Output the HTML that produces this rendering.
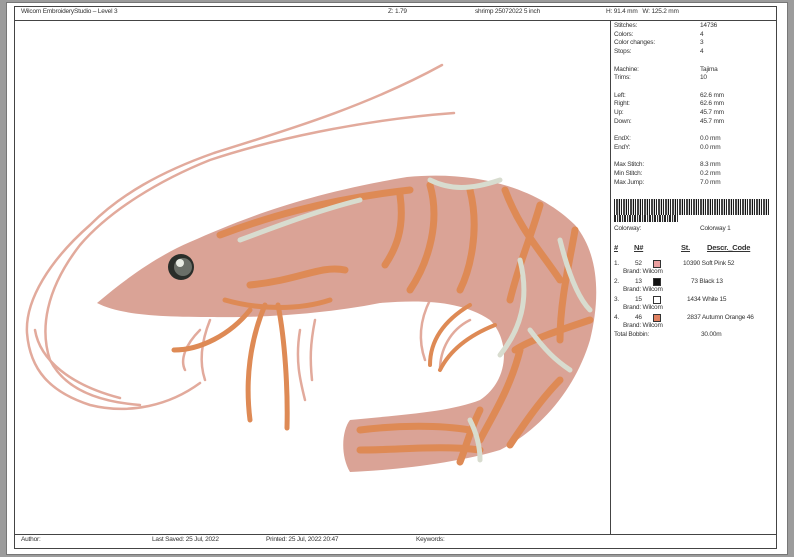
<!DOCTYPE html>
<html><head><style>
body{margin:0;width:794px;height:557px;background:#9c9c9c;position:relative;overflow:hidden;font-family:"Liberation Sans",sans-serif;}
.page{position:absolute;left:6px;top:2px;width:780px;height:551px;background:#fff;border:1px solid #777;}
.frame{position:absolute;left:14px;top:6px;width:761px;height:541px;border:1px solid #444;}
.t{position:absolute;font-size:6.5px;color:#333;white-space:nowrap;letter-spacing:-0.2px}
.sw{position:absolute;width:6px;height:6px;border:1px solid #333}
</style></head><body>
<div class="page"></div>
<div class="frame"></div>
<div style="position:absolute;left:14px;top:20px;width:762px;height:1px;background:#444"></div>
<div style="position:absolute;left:14px;top:534px;width:762px;height:1px;background:#444"></div>
<div style="position:absolute;left:610px;top:20px;width:1px;height:514px;background:#444"></div>
<div class="t" style="left:21px;top:8px">Wilcom EmbroideryStudio – Level 3</div>
<div class="t" style="left:388px;top:8px">Z: 1.79</div>
<div class="t" style="left:475px;top:8px">shrimp 25072022 5 inch</div>
<div class="t" style="left:606px;top:8px">H: 91.4 mm &nbsp; W: 125.2 mm</div>
<div class="t" style="left:21px;top:536px">Author:</div>
<div class="t" style="left:152px;top:536px">Last Saved: 25 Jul, 2022</div>
<div class="t" style="left:266px;top:536px">Printed: 25 Jul, 2022 20:47</div>
<div class="t" style="left:416px;top:536px">Keywords:</div>
<div class="t" style="left:614px;top:22px;line-height:8.7px">Stitches:<br>Colors:<br>Color changes:<br>Stops:<br><br>Machine:<br>Trims:<br><br>Left:<br>Right:<br>Up:<br>Down:<br><br>EndX:<br>EndY:<br><br>Max Stitch:<br>Min Stitch:<br>Max Jump:</div>
<div class="t" style="left:700px;top:22px;line-height:8.7px">14736<br>4<br>3<br>4<br><br>Tajima<br>10<br><br>62.6 mm<br>62.6 mm<br>45.7 mm<br>45.7 mm<br><br>0.0 mm<br>0.0 mm<br><br>8.3 mm<br>0.2 mm<br>7.0 mm</div>
<div style="position:absolute;left:614px;top:199px;width:155px;height:16px;background:repeating-linear-gradient(90deg,#222 0 1px,#fff 1px 2px,#444 2px 4px,#ccc 4px 5px,#111 5px 6px,#eee 6px 7px)"></div>
<div style="position:absolute;left:614px;top:215px;width:64px;height:7px;background:repeating-linear-gradient(90deg,#222 0 2px,#fff 2px 3px,#333 3px 4px,#ddd 4px 5px)"></div>
<div class="t" style="left:614px;top:225px">Colorway:</div>
<div class="t" style="left:700px;top:225px">Colorway 1</div>
<div class="t" style="left:614px;top:243px;font-size:7.5px;font-weight:bold;text-decoration:underline">#</div>
<div class="t" style="left:634px;top:243px;font-size:7.5px;font-weight:bold;text-decoration:underline">N#</div>
<div class="t" style="left:681px;top:243px;font-size:7.5px;font-weight:bold;text-decoration:underline">St.</div>
<div class="t" style="left:707px;top:243px;font-size:7.5px;font-weight:bold;text-decoration:underline">Descr._Code</div>
<div class="t" style="left:614px;top:260px">1.</div><div class="t" style="left:635px;top:260px">52</div><div class="sw" style="left:653px;top:260px;background:#eba0a0"></div><div class="t" style="left:683px;top:260px">10390 Soft Pink 52</div><div class="t" style="left:623px;top:268px">Brand: Wilcom</div>
<div class="t" style="left:614px;top:278px">2.</div><div class="t" style="left:635px;top:278px">13</div><div class="sw" style="left:653px;top:278px;background:#111"></div><div class="t" style="left:691px;top:278px">73 Black 13</div><div class="t" style="left:623px;top:286px">Brand: Wilcom</div>
<div class="t" style="left:614px;top:296px">3.</div><div class="t" style="left:635px;top:296px">15</div><div class="sw" style="left:653px;top:296px;background:#fff"></div><div class="t" style="left:687px;top:296px">1434 White 15</div><div class="t" style="left:623px;top:304px">Brand: Wilcom</div>
<div class="t" style="left:614px;top:314px">4.</div><div class="t" style="left:635px;top:314px">46</div><div class="sw" style="left:653px;top:314px;background:#e08060"></div><div class="t" style="left:687px;top:314px">2837 Autumn Orange 46</div><div class="t" style="left:623px;top:322px">Brand: Wilcom</div>
<div class="t" style="left:614px;top:331px">Total Bobbin:</div><div class="t" style="left:701px;top:331px">30.00m</div>

<svg style="position:absolute;left:0;top:0" width="610" height="534" viewBox="0 0 610 534">
<g fill="none" stroke="#e2aa9c" stroke-width="2.5" stroke-linecap="round">
<path d="M442 65 C360 110 270 135 214 153 C160 172 120 195 90 225 C50 260 25 300 27 333 C30 370 50 392 90 405 C130 415 170 405 200 383"/>
<path d="M454 113 C360 120 270 140 210 160 C160 180 110 210 80 245 C45 290 40 330 50 360 C65 390 100 402 140 405"/>
<path d="M35 330 C40 360 70 385 120 398"/>
<path d="M200 330 C185 345 180 360 185 370"/>
<path d="M210 320 C200 345 200 365 205 380"/>
<path d="M300 330 C295 360 300 380 305 400"/>
<path d="M315 320 C310 345 310 360 312 380"/>
<path d="M430 300 C420 320 418 340 425 360"/>
<path d="M470 320 C450 330 440 350 440 370"/>
</g>
<path d="M97 303 C130 275 160 255 190 242 C240 220 300 195 407 177 C480 170 540 190 575 225 C600 255 600 300 590 340 C575 390 540 430 500 450 C460 462 400 470 350 472 C340 455 342 430 350 420 C400 415 450 412 480 400 C510 380 510 340 490 320 C460 300 420 300 380 303 C320 315 250 318 214 317 C160 317 120 315 97 303Z" fill="#daa396"/>
<g fill="none" stroke="#de8a55" stroke-width="7" stroke-linecap="round">
<path d="M220 235 C260 220 320 200 410 190"/>
<path d="M250 285 C300 280 320 265 345 270"/>
<path d="M400 195 C405 230 395 250 385 265"/>
<path d="M430 185 C440 220 430 260 410 290"/>
<path d="M470 190 C480 230 470 270 460 290"/>
<path d="M505 190 C520 230 540 250 560 280"/>
<path d="M540 205 C530 240 520 260 510 300"/>
<path d="M575 230 C570 260 560 300 560 340"/>
<path d="M590 320 C560 330 530 340 515 350"/>
<path d="M520 350 C510 390 490 420 480 440"/>
<path d="M560 380 C540 400 520 430 510 445"/>
<path d="M480 410 C470 430 465 450 460 462"/>
<path d="M360 430 C400 425 440 425 470 430"/>
<path d="M360 450 C400 450 440 445 480 450"/>
<path d="M225 300 C260 310 300 310 330 300" stroke-width="5"/>
<path d="M265 305 C250 340 245 380 250 420" stroke-width="5"/>
<path d="M278 305 C285 340 288 390 287 428" stroke-width="5"/>
<path d="M250 310 C230 335 200 350 174 350" stroke-width="5"/>
<path d="M495 325 C470 335 450 350 440 370" stroke-width="4"/>
<path d="M470 305 C445 320 430 340 430 365" stroke-width="4"/>
</g>
<g fill="none" stroke="#d8dccf" stroke-width="5" stroke-linecap="round">
<path d="M240 240 C280 225 320 210 360 200"/>
<path d="M430 180 C450 190 470 190 500 180"/>
<path d="M560 240 C570 280 580 300 590 310"/>
<path d="M530 330 C545 350 555 360 570 370"/>
<path d="M470 420 C480 440 480 455 480 460"/>
<path d="M520 260 C530 300 520 330 500 355"/>
</g>
<circle cx="181" cy="267" r="13" fill="#2a2e2a"/>
<circle cx="183" cy="267" r="9" fill="#6a6f68"/>
<circle cx="180" cy="263" r="4" fill="#e8ece4"/>
</svg>
</body></html>
